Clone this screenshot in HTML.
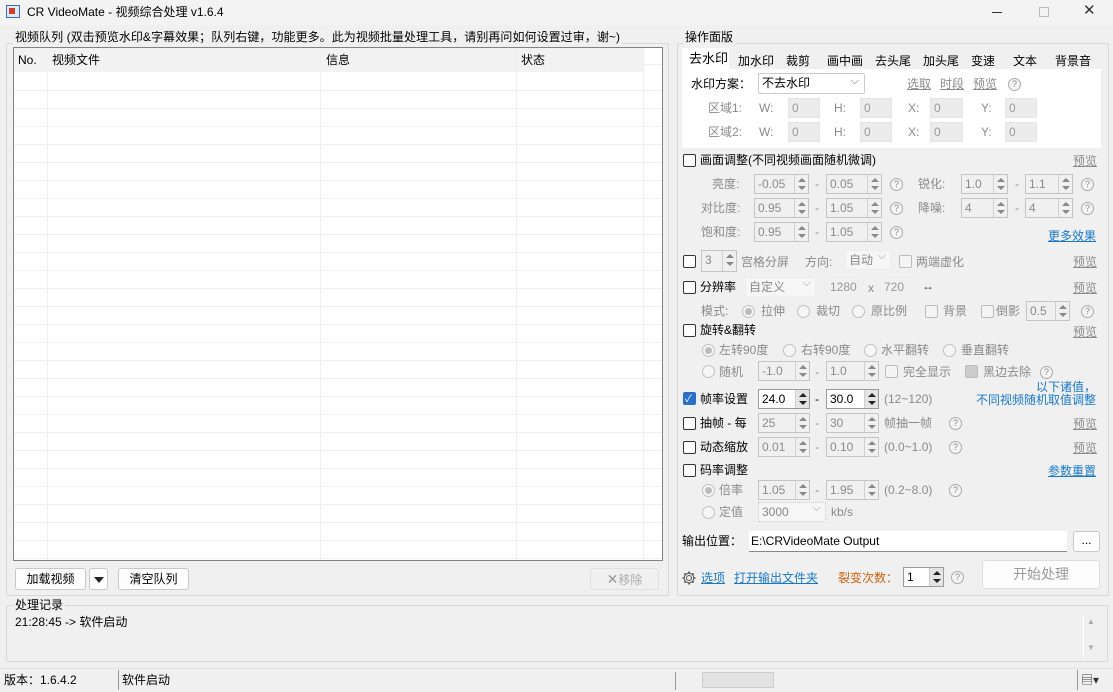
<!DOCTYPE html>
<html><head><meta charset="utf-8">
<style>
*{box-sizing:border-box;margin:0;padding:0}
body{width:1113px;height:692px;position:relative;background:#f0f0f0;font-family:"Liberation Sans","Noto Sans CJK SC",sans-serif;font-size:12px;color:#000;overflow:hidden}
.a{position:absolute}
.t{position:absolute;white-space:nowrap;line-height:16px;font-size:12px}
.g{color:#8a8a8a}
.l{color:#8a8a8a;text-decoration:underline}
.lb{color:#1a78c8;text-decoration:underline}
.sp{position:absolute;height:20px;border:1px solid #c4c4c4;background:#f0f0f0;color:#8a8a8a;font-size:12px;line-height:18px;padding-left:3px}
.sp.e{background:#fff;color:#000;border-color:#9a9a9a}
.sp i{position:absolute;right:0;top:0;width:14px;height:18px;border-left:1px solid #d0d0d0;background:#f0f0f0}
.sp i:before{content:"";position:absolute;left:3px;top:3px;border:4px solid transparent;border-bottom:4px solid #888;border-top:0}
.sp i:after{content:"";position:absolute;left:3px;top:11px;border:4px solid transparent;border-top:4px solid #888;border-bottom:0}
.sp.e i{background:#e4e4e4}
.sp.e i:before{border-bottom-color:#222}.sp.e i:after{border-top-color:#222}
.cb{position:absolute;width:13px;height:13px;border:1px solid #333;border-radius:2px;background:#fff}
.cb.d{border-color:#bbb;background:#f4f4f4}
.rb{position:absolute;width:13px;height:13px;border:1px solid #c0c0c0;border-radius:50%;background:#f6f6f6}
.rb.f:after{content:"";position:absolute;left:2px;top:2px;width:7px;height:7px;border-radius:50%;background:#bbb}
.q{position:absolute;width:13px;height:13px;border:1px solid #aaa;border-radius:50%;font-size:9px;line-height:11px;text-align:center;color:#888;background:#f4f4f4}
.in{position:absolute;height:20px;background:#ececec;border:1px solid #e4e4e4;color:#999;line-height:18px;padding-left:3px}
.btn{position:absolute;height:22px;border:1px solid #c8c8c8;border-radius:3px;background:#fdfdfd;text-align:center;line-height:20px}
.sel{position:absolute;height:20px;background:#f6f6f6;border:1px solid #ececec;color:#888;line-height:18px;padding-left:3px}
.sel:after{content:"⌵";position:absolute;right:4px;top:-4px;font-size:11px;color:#999}
.gb{position:absolute;border:1px solid #d8d8d8;border-radius:2px}
</style></head><body>
<div class="a" style="left:0;top:0;width:1113px;height:25px;background:#f3f3f3"></div>
<div class="a" style="left:6px;top:5px;width:14px;height:13px;border:1px solid #3a6fc4;background:#dde8f8"></div>
<div class="a" style="left:9px;top:8px;width:6px;height:6px;background:#d04020"></div>
<div class="t" style="left:27px;top:4px">CR VideoMate - 视频综合处理 v1.6.4</div>
<div class="a" style="left:992px;top:12px;width:10px;height:1px;background:#333"></div>
<div class="a" style="left:1039px;top:7px;width:10px;height:10px;border:1px solid #bbb"></div>
<div class="t" style="left:1083px;top:3px;font-size:15px;color:#333">✕</div>

<div class="gb" style="left:6px;top:43px;width:663px;height:553px"></div>
<div class="t" style="left:13px;top:29px;background:#f0f0f0;padding:0 2px;letter-spacing:0.05px">视频队列 (双击预览水印&amp;字幕效果；队列右键，功能更多。此为视频批量处理工具，请别再问如何设置过审，谢~)</div>
<div class="a" style="left:13px;top:47px;width:650px;height:514px;background:#fff;border:1px solid #828282;
background-image:repeating-linear-gradient(to bottom,transparent 0,transparent 17px,#f0f0f0 17px,#f0f0f0 18px);background-position:0 25px"></div>
<div class="a" style="left:14px;top:48px;width:629px;height:24px;background:#f2f2f2"></div>
<div class="a" style="left:47px;top:48px;width:1px;height:512px;background:#eee"></div>
<div class="a" style="left:320px;top:48px;width:1px;height:512px;background:#eee"></div>
<div class="a" style="left:516px;top:48px;width:1px;height:512px;background:#eee"></div>
<div class="a" style="left:643px;top:48px;width:1px;height:512px;background:#eee"></div>
<div class="t" style="left:18px;top:52px">No.</div>
<div class="t" style="left:52px;top:52px">视频文件</div>
<div class="t" style="left:326px;top:52px">信息</div>
<div class="t" style="left:521px;top:52px">状态</div>
<div class="btn" style="left:15px;top:568px;width:71px">加载视频</div>
<div class="btn" style="left:89px;top:568px;width:19px"><span style="display:inline-block;border:5px solid transparent;border-top:6px solid #222;margin-top:8px"></span></div>
<div class="btn" style="left:118px;top:568px;width:71px">清空队列</div>
<div class="btn" style="left:590px;top:568px;width:69px;color:#aaa;background:#f0f0f0;border-color:#e0e0e0"><span style="font-size:14px;color:#999">✕</span>移除</div>

<div class="gb" style="left:6px;top:605px;width:1102px;height:57px"></div>
<div class="t" style="left:13px;top:597px;background:#f0f0f0;padding:0 2px">处理记录</div>
<div class="t" style="left:15px;top:614px">21:28:45 -&gt; 软件启动</div>
<div class="a" style="left:1083px;top:616px;width:1px;height:42px;background:#fff"></div>
<div class="t" style="left:1087px;top:614px;font-size:8px;color:#aaa">▲</div>
<div class="t" style="left:1087px;top:640px;font-size:8px;color:#aaa">▼</div>

<div class="a" style="left:0;top:668px;width:1113px;height:1px;background:#e2e2e2"></div>
<div class="t" style="left:4px;top:672px">版本：1.6.4.2</div>
<div class="a" style="left:118px;top:670px;width:1px;height:20px;background:#999"></div>
<div class="t" style="left:122px;top:672px">软件启动</div>
<div class="a" style="left:675px;top:672px;width:1px;height:18px;background:#999"></div>
<div class="a" style="left:702px;top:672px;width:72px;height:16px;background:#e2e2e2;border:1px solid #ccc"></div>
<div class="a" style="left:1077px;top:670px;width:1px;height:20px;background:#999"></div>
<div class="t" style="left:1081px;top:672px;color:#333">▤▾</div>

<div class="gb" style="left:677px;top:43px;width:432px;height:553px"></div>
<div class="t" style="left:683px;top:29px;background:#f0f0f0;padding:0 2px">操作面版</div>
<div class="a" style="left:682px;top:69px;width:419px;height:79px;background:#fff"></div>
<div class="a" style="left:682px;top:48px;width:47px;height:23px;background:#fff"></div>
<div class="t" style="left:689px;top:51px;font-size:13px">去水印</div>
<div class="t" style="left:738px;top:53px">加水印</div>
<div class="t" style="left:786px;top:53px">裁剪</div>
<div class="t" style="left:827px;top:53px">画中画</div>
<div class="t" style="left:875px;top:53px">去头尾</div>
<div class="t" style="left:923px;top:53px">加头尾</div>
<div class="t" style="left:971px;top:53px">变速</div>
<div class="t" style="left:1013px;top:53px">文本</div>
<div class="t" style="left:1055px;top:53px">背景音</div>
<div class="t" style="left:691px;top:76px">水印方案：</div>
<div class="a" style="left:758px;top:73px;width:107px;height:21px;border:1px solid #ccc;border-radius:2px;background:#fff;line-height:19px;padding-left:3px">不去水印<span style="position:absolute;right:5px;top:-2px;color:#666;font-size:11px">⌵</span></div>
<div class="t l" style="left:907px;top:76px">选取</div>
<div class="t l" style="left:940px;top:76px">时段</div>
<div class="t l" style="left:973px;top:76px">预览</div>
<div class="q" style="left:1008px;top:78px">?</div>
<div class="t g" style="left:708px;top:100px">区域1:</div><div class="t g" style="left:759px;top:100px">W:</div><div class="in" style="left:788px;top:98px;width:32px">0</div><div class="t g" style="left:834px;top:100px">H:</div><div class="in" style="left:860px;top:98px;width:32px">0</div><div class="t g" style="left:908px;top:100px">X:</div><div class="in" style="left:930px;top:98px;width:33px">0</div><div class="t g" style="left:981px;top:100px">Y:</div><div class="in" style="left:1005px;top:98px;width:32px">0</div>
<div class="t g" style="left:708px;top:124px">区域2:</div><div class="t g" style="left:759px;top:124px">W:</div><div class="in" style="left:788px;top:122px;width:32px">0</div><div class="t g" style="left:834px;top:124px">H:</div><div class="in" style="left:860px;top:122px;width:32px">0</div><div class="t g" style="left:908px;top:124px">X:</div><div class="in" style="left:930px;top:122px;width:33px">0</div><div class="t g" style="left:981px;top:124px">Y:</div><div class="in" style="left:1005px;top:122px;width:32px">0</div>

<div class="cb" style="left:683px;top:154px"></div>
<div class="t" style="left:700px;top:152px">画面调整(不同视频画面随机微调)</div>
<div class="t l" style="left:1073px;top:153px">预览</div>
<div class="t g" style="left:712px;top:176px">亮度:</div>
<div class="sp" style="left:754px;top:174px;width:55px">-0.05<i></i></div><div class="t g" style="left:815px;top:176px">-</div><div class="sp" style="left:826px;top:174px;width:56px">0.05<i></i></div><div class="q" style="left:890px;top:178px">?</div>
<div class="t g" style="left:918px;top:176px">锐化:</div>
<div class="sp" style="left:961px;top:174px;width:47px">1.0<i></i></div><div class="t g" style="left:1015px;top:176px">-</div><div class="sp" style="left:1025px;top:174px;width:48px">1.1<i></i></div><div class="q" style="left:1081px;top:178px">?</div>
<div class="t g" style="left:701px;top:200px">对比度:</div>
<div class="sp" style="left:754px;top:198px;width:55px">0.95<i></i></div><div class="t g" style="left:815px;top:200px">-</div><div class="sp" style="left:826px;top:198px;width:56px">1.05<i></i></div><div class="q" style="left:890px;top:202px">?</div>
<div class="t g" style="left:918px;top:200px">降噪:</div>
<div class="sp" style="left:961px;top:198px;width:47px">4<i></i></div><div class="t g" style="left:1015px;top:200px">-</div><div class="sp" style="left:1025px;top:198px;width:48px">4<i></i></div><div class="q" style="left:1081px;top:202px">?</div>
<div class="t g" style="left:701px;top:224px">饱和度:</div>
<div class="sp" style="left:754px;top:222px;width:55px">0.95<i></i></div><div class="t g" style="left:815px;top:224px">-</div><div class="sp" style="left:826px;top:222px;width:56px">1.05<i></i></div><div class="q" style="left:890px;top:226px">?</div>
<div class="t lb" style="left:1048px;top:228px">更多效果</div>

<div class="cb" style="left:683px;top:255px"></div>
<div class="sp" style="left:701px;top:250px;width:36px;height:22px">3<i style="height:20px"></i></div>
<div class="t g" style="left:741px;top:254px">宫格分屏</div>
<div class="t g" style="left:805px;top:254px">方向:</div>
<div class="sel" style="left:845px;top:250px;width:46px">自动</div>
<div class="cb d" style="left:899px;top:255px"></div>
<div class="t g" style="left:916px;top:254px">两端虚化</div>
<div class="t l" style="left:1073px;top:254px">预览</div>

<div class="cb" style="left:683px;top:281px"></div>
<div class="t" style="left:700px;top:279px">分辨率</div>
<div class="sel" style="left:745px;top:277px;width:71px">自定义</div>
<div class="in" style="left:826px;top:277px;width:34px;background:#f0f0f0;border-color:#eee">1280</div>
<div class="t g" style="left:868px;top:280px">x</div>
<div class="in" style="left:880px;top:277px;width:35px;background:#f0f0f0;border-color:#eee">720</div>
<div class="t" style="left:922px;top:278px;color:#444">↔</div>
<div class="t l" style="left:1073px;top:280px">预览</div>

<div class="t g" style="left:701px;top:303px">模式:</div>
<div class="rb f" style="left:742px;top:305px"></div><div class="t g" style="left:761px;top:303px">拉伸</div>
<div class="rb" style="left:797px;top:305px"></div><div class="t g" style="left:816px;top:303px">裁切</div>
<div class="rb" style="left:852px;top:305px"></div><div class="t g" style="left:871px;top:303px">原比例</div>
<div class="cb d" style="left:925px;top:305px"></div><div class="t g" style="left:943px;top:303px">背景</div>
<div class="cb d" style="left:981px;top:305px"></div><div class="t g" style="left:996px;top:303px">倒影</div>
<div class="sp" style="left:1026px;top:301px;width:44px">0.5<i></i></div>
<div class="q" style="left:1081px;top:305px">?</div>

<div class="cb" style="left:683px;top:324px"></div>
<div class="t" style="left:700px;top:322px">旋转&amp;翻转</div>
<div class="t l" style="left:1073px;top:324px">预览</div>
<div class="rb f" style="left:702px;top:344px"></div><div class="t g" style="left:719px;top:342px">左转90度</div>
<div class="rb" style="left:783px;top:344px"></div><div class="t g" style="left:801px;top:342px">右转90度</div>
<div class="rb" style="left:864px;top:344px"></div><div class="t g" style="left:881px;top:342px">水平翻转</div>
<div class="rb" style="left:943px;top:344px"></div><div class="t g" style="left:961px;top:342px">垂直翻转</div>
<div class="rb" style="left:702px;top:365px"></div><div class="t g" style="left:719px;top:364px">随机</div>
<div class="sp" style="left:758px;top:361px;width:52px">-1.0<i></i></div><div class="t g" style="left:815px;top:364px">-</div><div class="sp" style="left:826px;top:361px;width:53px">1.0<i></i></div>
<div class="cb d" style="left:885px;top:365px"></div><div class="t g" style="left:903px;top:364px">完全显示</div>
<div class="cb d" style="left:965px;top:365px;background:#ccc;border-color:#bbb"></div><div class="t g" style="left:983px;top:364px">黑边去除</div>
<div class="q" style="left:1040px;top:366px">?</div>
<div class="t" style="left:1036px;top:379px;color:#1a78c8">以下诸值，</div>
<div class="t" style="left:976px;top:392px;color:#1a78c8">不同视频随机取值调整</div>

<div class="cb" style="left:683px;top:392px;background:#2a6fc8;border-color:#2a6fc8"><span style="position:absolute;left:1px;top:-3px;color:#fff;font-size:10px">✓</span></div>
<div class="t" style="left:700px;top:391px">帧率设置</div>
<div class="sp e" style="left:758px;top:389px;width:52px">24.0<i></i></div><div class="t" style="left:815px;top:391px">-</div><div class="sp e" style="left:826px;top:389px;width:53px">30.0<i></i></div>
<div class="t g" style="left:884px;top:391px">(12~120)</div>

<div class="cb" style="left:683px;top:417px"></div>
<div class="t" style="left:700px;top:415px">抽帧 - 每</div>
<div class="sp" style="left:758px;top:413px;width:52px">25<i></i></div><div class="t g" style="left:815px;top:415px">-</div><div class="sp" style="left:826px;top:413px;width:53px">30<i></i></div>
<div class="t g" style="left:884px;top:415px">帧抽一帧</div><div class="q" style="left:949px;top:417px">?</div>
<div class="t l" style="left:1073px;top:416px">预览</div>

<div class="cb" style="left:683px;top:441px"></div>
<div class="t" style="left:700px;top:439px">动态缩放</div>
<div class="sp" style="left:758px;top:437px;width:52px">0.01<i></i></div><div class="t g" style="left:815px;top:439px">-</div><div class="sp" style="left:826px;top:437px;width:53px">0.10<i></i></div>
<div class="t g" style="left:884px;top:439px">(0.0~1.0)</div><div class="q" style="left:949px;top:441px">?</div>
<div class="t l" style="left:1073px;top:440px">预览</div>

<div class="cb" style="left:683px;top:464px"></div>
<div class="t" style="left:700px;top:462px">码率调整</div>
<div class="t lb" style="left:1048px;top:463px">参数重置</div>
<div class="rb f" style="left:702px;top:484px"></div><div class="t g" style="left:719px;top:482px">倍率</div>
<div class="sp" style="left:758px;top:480px;width:52px">1.05<i></i></div><div class="t g" style="left:815px;top:482px">-</div><div class="sp" style="left:826px;top:480px;width:53px">1.95<i></i></div>
<div class="t g" style="left:884px;top:482px">(0.2~8.0)</div><div class="q" style="left:949px;top:484px">?</div>
<div class="rb" style="left:702px;top:506px"></div><div class="t g" style="left:719px;top:504px">定值</div>
<div class="sel" style="left:758px;top:502px;width:68px;border:1px dotted #ccc">3000</div>
<div class="t g" style="left:831px;top:504px">kb/s</div>

<div class="t" style="left:682px;top:533px">输出位置：</div>
<div class="a" style="left:749px;top:531px;width:318px;height:21px;background:#fff;border-bottom:1px solid #888;padding-left:2px;line-height:20px">E:\CRVideoMate Output</div>
<div class="btn" style="left:1073px;top:531px;width:27px;height:21px;line-height:17px">...</div>

<svg class="a" style="left:681px;top:570px" width="16" height="16" viewBox="0 0 16 16"><circle cx="8" cy="8" r="2.5" fill="none" stroke="#555"/><path d="M8 1.5v2M8 12.5v2M1.5 8h2M12.5 8h2M3.4 3.4l1.4 1.4M11.2 11.2l1.4 1.4M3.4 12.6l1.4-1.4M11.2 4.8l1.4-1.4" stroke="#555" stroke-width="1.6"/><circle cx="8" cy="8" r="4.8" fill="none" stroke="#555"/></svg>
<div class="t lb" style="left:701px;top:570px">选项</div>
<div class="t lb" style="left:734px;top:570px">打开输出文件夹</div>
<div class="t" style="left:838px;top:570px;color:#d06010">裂变次数：</div>
<div class="sp e" style="left:903px;top:567px;width:41px">1<i></i></div>
<div class="q" style="left:951px;top:571px">?</div>
<div class="btn" style="left:982px;top:560px;width:118px;height:29px;line-height:27px;font-size:14px;color:#999;border-color:#ddd">开始处理</div>
</body></html>
